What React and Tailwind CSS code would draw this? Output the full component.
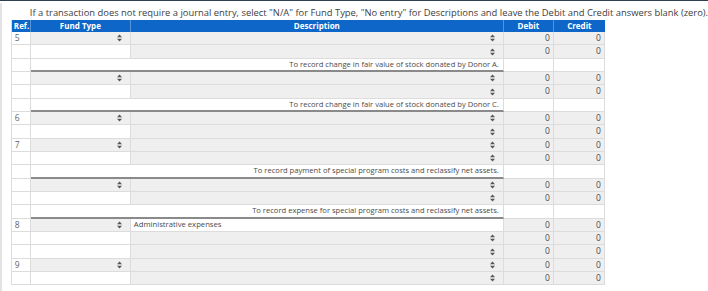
import React from "react";

const rows = [
  { ref: "5", fund: true, desc: "select" },
  { fund: false, desc: "select" },
  { note: "To record change in fair value of stock donated by Donor A." },
  { fund: true, desc: "select" },
  { fund: false, desc: "select" },
  { note: "To record change in fair value of stock donated by Donor C." },
  { ref: "6", fund: true, desc: "select" },
  { fund: false, desc: "select" },
  { ref: "7", fund: true, desc: "select" },
  { fund: false, desc: "select" },
  { note: "To record payment of special program costs and reclassify net assets." },
  { fund: true, desc: "select" },
  { fund: false, desc: "select" },
  { note: "To record expense for special program costs and reclassify net assets." },
  { ref: "8", fund: true, desc: "Administrative expenses" },
  { fund: false, desc: "select" },
  { fund: false, desc: "select" },
  { ref: "9", fund: true, desc: "select" },
  { fund: false, desc: "select" },
];

const heights = ["h-[13px]", "h-[14px]", "h-[13px]"];

function Arrows() {
  return (
    <svg width="5" height="8" viewBox="0 0 5 8" className="shrink-0">
      <path d="M0 3.2 L2.5 0.4 L5 3.2 Z" fill="#555" />
      <path d="M0 4.8 L2.5 7.6 L5 4.8 Z" fill="#555" />
    </svg>
  );
}

export default function App() {
  return (
    <div
      className="w-[708px] h-[291px] bg-white overflow-hidden border-t border-[#2f3f4f]"
      style={{ fontFamily: '"Open Sans", "Liberation Sans", sans-serif' }}
    >
      <div className="flex h-full">
        <div className="w-[2px] bg-[#e3e3e3] mt-[2px]" />
        <div className="pl-[9px] flex flex-col">
          <div className="h-[19px] pl-[19px] pt-[5px] leading-[14px] text-[9.4px] text-[#404040] whitespace-nowrap">
            If a transaction does not require a journal entry, select "N/A" for Fund Type, "No entry" for Descriptions and leave the Debit and Credit answers blank (zero).
          </div>
          <div className="w-[594px] border-l border-[#dcdcdc]">
            <div className="flex h-[12px] bg-[#0d66c8] text-white font-bold text-[8px] leading-[12px]">
              <div className="w-[19px] pl-[2px] border-r border-white/30">Ref.</div>
              <div className="w-[100px] text-center border-r border-white/30">Fund Type</div>
              <div className="w-[373px] text-center border-r border-white/30">Description</div>
              <div className="w-[50px] text-center border-r border-white/30">Debit</div>
              <div className="w-[51px] text-center">Credit</div>
            </div>
            {rows.map((r, i) => {
              const h = heights[i % 3];
              if (r.note) {
                return (
                  <div key={i} className={`flex ${h} text-[7.6px] text-[#4a4a4a]`}>
                    <div className="w-[19px] border-r border-b border-[#dcdcdc] bg-white" />
                    <div className="w-[473px] border-b-2 border-[#8a8a8a] bg-white flex items-center justify-end pr-[4px] border-r border-r-[#dcdcdc]">
                      {r.note}
                    </div>
                    <div className="w-[50px] border-r border-b border-[#dcdcdc] bg-white" />
                    <div className="w-[51px] border-r border-b border-[#dcdcdc] bg-white" />
                  </div>
                );
              }
              return (
                <div key={i} className={`flex ${h} text-[8.5px] text-[#4a4a4a]`}>
                  <div className="w-[19px] border-r border-b border-[#dcdcdc] bg-white flex items-center pl-[3px] text-[#666]">
                    {r.ref || ""}
                  </div>
                  <div
                    className={`w-[100px] border-r border-b border-[#dcdcdc] flex items-center justify-end pr-[8px] ${
                      r.fund ? "bg-[#efefef]" : "bg-white"
                    }`}
                  >
                    {r.fund && <Arrows />}
                  </div>
                  {r.desc === "select" ? (
                    <div className="w-[373px] border-r border-b border-[#dcdcdc] bg-[#efefef] flex items-center justify-end pr-[8px]">
                      <Arrows />
                    </div>
                  ) : (
                    <div className="w-[373px] border-r border-b border-[#dcdcdc] bg-white flex items-center pl-[3px] text-[7.7px]">
                      {r.desc}
                    </div>
                  )}
                  <div className="w-[50px] border-r border-b border-[#dcdcdc] bg-[#efefef] flex items-center justify-end pr-[3px]">
                    0
                  </div>
                  <div className="w-[51px] border-r border-b border-[#dcdcdc] bg-[#efefef] flex items-center justify-end pr-[3px]">
                    0
                  </div>
                </div>
              );
            })}
          </div>
        </div>
      </div>
    </div>
  );
}
